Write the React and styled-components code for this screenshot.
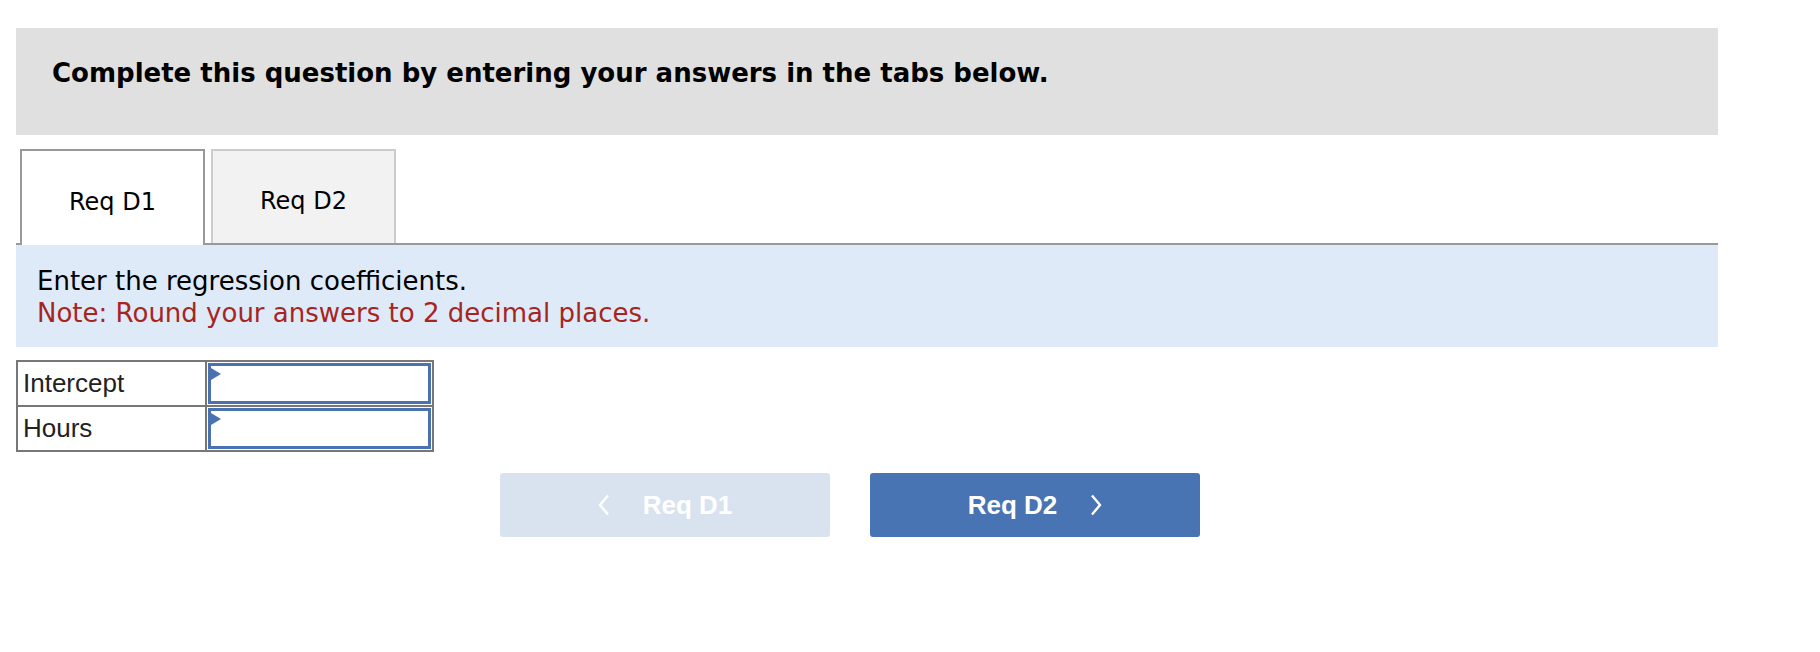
import styled, { createGlobalStyle } from "styled-components";

const GlobalStyle = createGlobalStyle`
  body {
    margin: 0;
    background: #fff;
    font-family: "DejaVu Sans", Verdana, sans-serif;
  }
`;

const Page = styled.div`
  padding: 28px 0 0 16px;
  width: 1702px;
`;

const Header = styled.div`
  height: 107px;
  background: #e0e0e0;
  display: flex;
  align-items: center;
  padding: 0 0 18px 36px;
  box-sizing: border-box;
  font-size: 26px;
  font-weight: bold;
  color: #000;
`;

const TabBar = styled.div`
  display: flex;
  gap: 6px;
  margin-top: 14px;
  padding-left: 4px;
  border-bottom: 2px solid #999;
  height: 94px;
`;

const Tab = styled.div`
  width: 185px;
  box-sizing: border-box;
  display: flex;
  align-items: center;
  justify-content: center;
  font-size: 24px;
  color: #000;
  padding-top: 8px;
  background: ${(p) => (p.$active ? "#fff" : "#f2f2f2")};
  border: 2px solid ${(p) => (p.$active ? "#999" : "#ccc")};
  border-bottom: none;
  height: ${(p) => (p.$active ? "96px" : "94px")};
  position: relative;
  z-index: ${(p) => (p.$active ? 1 : 0)};
`;

const Instructions = styled.div`
  background: #deeaf7;
  padding: 20px 21px 18px;
  font-size: 26px;
  line-height: 32px;
  color: #000;
`;

const Note = styled.div`
  color: #a7251f;
`;

const Grid = styled.table`
  margin-top: 13px;
  border-collapse: collapse;
  font-family: "Liberation Sans", Arial, sans-serif;
  font-size: 26px;
  color: #222;
`;

const Label = styled.td`
  width: 189px;
  height: 42px;
  border: 2px solid #777;
  padding: 0 0 0 5px;
  box-sizing: border-box;
`;

const InputCell = styled.td`
  width: 223px;
  border: 2px solid #777;
  padding: 1px;
`;

const Field = styled.div`
  height: 41px;
  border: 3px solid #4a72b0;
  box-sizing: border-box;
  background: #fff;
  position: relative;
`;

const Marker = styled.span`
  position: absolute;
  left: 0;
  top: 2px;
  width: 0;
  height: 0;
  border-top: 6px solid transparent;
  border-bottom: 6px solid transparent;
  border-left: 10px solid #4a72b0;
`;

const NavRow = styled.div`
  display: flex;
  gap: 40px;
  margin-top: 21px;
  padding-left: 484px;
`;

const NavButton = styled.div`
  width: 330px;
  height: 64px;
  border-radius: 3px;
  display: flex;
  align-items: center;
  justify-content: center;
  gap: 33px;
  background: ${(p) => (p.$disabled ? "#d9e3ef" : "#4874b3")};
  color: #fff;
  font-family: "Liberation Sans", Arial, sans-serif;
  font-weight: bold;
  font-size: 26px;
`;

const Chevron = ({ dir }) => (
  <svg width="12" height="22" viewBox="0 0 12 22">
    <polyline
      points={dir === "left" ? "10,1.5 2,11 10,20.5" : "2,1.5 10,11 2,20.5"}
      fill="none"
      stroke="#fff"
      strokeWidth="2.4"
    />
  </svg>
);

const rows = ["Intercept", "Hours"];

const App = () => {
  return (
    <Page>
      <GlobalStyle />
      <Header>Complete this question by entering your answers in the tabs below.</Header>

      <TabBar>
        <Tab $active>Req D1</Tab>
        <Tab>Req D2</Tab>
      </TabBar>

      <Instructions>
        <div>Enter the regression coefficients.</div>
        <Note>Note: Round your answers to 2 decimal places.</Note>
      </Instructions>

      <Grid>
        <tbody>
          {rows.map((r) => (
            <tr key={r}>
              <Label>{r}</Label>
              <InputCell>
                <Field>
                  <Marker />
                </Field>
              </InputCell>
            </tr>
          ))}
        </tbody>
      </Grid>

      <NavRow>
        <NavButton $disabled>
          <Chevron dir="left" />
          <span>Req D1</span>
        </NavButton>
        <NavButton>
          <span>Req D2</span>
          <Chevron dir="right" />
        </NavButton>
      </NavRow>
    </Page>
  );
};

export default App;
